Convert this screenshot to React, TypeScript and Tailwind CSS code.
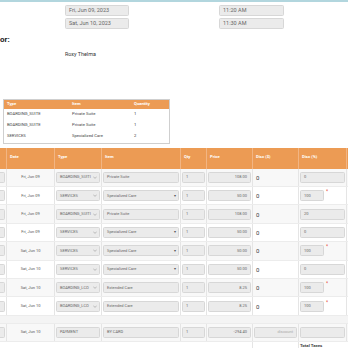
import React from 'react';

type Row = {
    date: string;
    type: string;
    item: string;
    itemSel?: boolean;
    price: string;
    pct: string;
    req?: boolean;
};

const rows: Row[] = [
    { date: 'Fri, Jun 09', type: 'BOARDING_SUITI', item: 'Private Suite', price: '108.00', pct: '0' },
    { date: 'Fri, Jun 09', type: 'SERVICES', item: 'Specialized Care', itemSel: true, price: '50.00', pct: '100', req: true },
    { date: 'Fri, Jun 09', type: 'BOARDING_SUITI', item: 'Private Suite', price: '108.00', pct: '20' },
    { date: 'Fri, Jun 09', type: 'SERVICES', item: 'Specialized Care', itemSel: true, price: '50.00', pct: '0' },
    { date: 'Sat, Jun 10', type: 'SERVICES', item: 'Specialized Care', itemSel: true, price: '50.00', pct: '100', req: true },
    { date: 'Sat, Jun 10', type: 'SERVICES', item: 'Specialized Care', itemSel: true, price: '50.00', pct: '0' },
    { date: 'Sat, Jun 10', type: 'BOARDING_LCO', item: 'Extended Care', price: '8.25', pct: '100', req: true },
    { date: 'Sat, Jun 10', type: 'BOARDING_LCO', item: 'Extended Care', price: '8.25', pct: '100', req: true },
];

const summary = [
    ['BOARDING_SUITE', 'Private Suite', '1'],
    ['BOARDING_SUITE', 'Private Suite', '1'],
    ['SERVICES', 'Specialized Care', '2'],
];

// grey input box used all over the grid
const Box: React.FC<{ className?: string; children?: React.ReactNode }> = ({ className = '', children }) => (
    <div className={`h-[11px] flex items-center bg-[#ebebeb] border border-[#d7d7d7] rounded-[1.5px] text-[4px] text-[#666] ${className}`}>
        {children}
    </div>
);

const Chevron = () => (
    <svg width="4" height="3" viewBox="0 0 4 3" className="ml-auto mr-[2px]">
        <path d="M0.3 0.6 L2 2.4 L3.7 0.6" fill="none" stroke="#888" strokeWidth="0.5" />
    </svg>
);

const cell = 'border-r border-[#e5e5e5] flex items-center px-[1px]';

const App: React.FC = () => {
    return (
        <div className="w-[348px] h-[348px] overflow-hidden bg-white antialiased font-['Roboto','Liberation_Sans',sans-serif]">
            <div className="h-[2px] bg-[#b2d6de]" />

            {/* Date / time range */}
            <div className="flex pt-[3px] pl-[65px]">
                <div className="w-[64px] flex flex-col gap-[2px]">
                    <Box className="h-[11.5px] pl-[3px] text-[5.5px] text-[#555]">Fri, Jun 09, 2023</Box>
                    <Box className="h-[11.5px] pl-[3px] text-[5.5px] text-[#555]">Sat, Jun 10, 2023</Box>
                </div>
                <div className="w-[65px] ml-[90px] flex flex-col gap-[2px]">
                    <Box className="h-[11.5px] pl-[3px] text-[5.5px] text-[#555]">11:20 AM</Box>
                    <Box className="h-[11.5px] pl-[3px] text-[5.5px] text-[#555]">11:30 AM</Box>
                </div>
            </div>

            <div className="mt-[7px] text-[8px] leading-[8px] font-bold text-[#222]">or:</div>
            <div className="mt-[7px] pl-[65px] text-[5.4px] leading-[6px] text-[#333]">Roxy Thelma</div>

            {/* Summary table */}
            <div className="mt-[42px] ml-[3px] w-[167px] border border-[#cfcfcf] pb-[1px]">
                <div className="h-[9px] bg-[#ec9b54] flex items-center text-[4.2px] font-bold text-white">
                    <div className="w-[68px] pl-[3px]">Type</div>
                    <div className="w-[62px]">Item</div>
                    <div>Quantity</div>
                </div>
                {summary.map((r, i) => (
                    <div key={i} className="h-[11px] flex items-center text-[4.2px] text-[#444]">
                        <div className="w-[68px] pl-[3px]">{r[0]}</div>
                        <div className="w-[62px]">{r[1]}</div>
                        <div className="text-[#333]">{r[2]}</div>
                    </div>
                ))}
            </div>

            {/* Line items */}
            <div className="mt-[4px] w-[420px] text-[4px]">
                <div className="h-[20.5px] bg-[#ec9b54] grid grid-cols-[7px_48px_47px_79px_26px_46px_46px_48px_73px] text-[4.2px] font-bold text-white">
                    {['', 'Date', 'Type', 'Item', 'Qty', 'Price', 'Disc ($)', 'Disc (%)', ''].map((h, i) => (
                        <div key={i} className="border-r border-[#f2b583] flex items-center pl-[3px] pb-[3px]">{h}</div>
                    ))}
                </div>

                {rows.map((r, i) => (
                    <div
                        key={i}
                        className={`h-[18.43px] grid grid-cols-[7px_48px_47px_79px_26px_46px_46px_48px_73px] border-b border-[#ececec] ${i % 2 === 0 ? 'bg-[#f8f8f8]' : 'bg-white'}`}
                    >
                        <div className={`${cell} overflow-hidden`}>
                            <Box className="ml-[-20px] w-[24px] shrink-0" />
                        </div>
                        <div className={`${cell} justify-center text-[#555]`}>{r.date}</div>
                        <div className={cell}>
                            <Box className="w-full pl-[3px]">
                                <span>{r.type}</span>
                                <Chevron />
                            </Box>
                        </div>
                        <div className={cell}>
                            <Box className="w-full pl-[3px] text-[#555]">
                                <span>{r.item}</span>
                                {r.itemSel && <span className="ml-auto mr-[2px] text-[4px] text-[#555]">▾</span>}
                            </Box>
                        </div>
                        <div className={cell}>
                            <Box className="w-full pl-[3px]">1</Box>
                        </div>
                        <div className={cell}>
                            <Box className="w-full justify-end pr-[3px] text-[#555]">{r.price}</Box>
                        </div>
                        <div className={`${cell} pl-[3px] text-[6px] text-[#3a3a3a]`}>0</div>
                        <div className={cell}>
                            {r.req ? (
                                <div className="flex items-start">
                                    <Box className="w-[24px] pl-[3px]">{r.pct}</Box>
                                    <span className="ml-[2px] mt-[-2px] text-[5px] text-[#e53935]">*</span>
                                </div>
                            ) : (
                                <Box className="w-full pl-[3px]">{r.pct}</Box>
                            )}
                        </div>
                        <div />
                    </div>
                ))}

                <div className="h-[7.7px] bg-[#f4f4f4] border-b border-[#ececec]" />

                {/* Payment row */}
                <div className="h-[18px] grid grid-cols-[7px_48px_47px_79px_26px_46px_46px_48px_73px] bg-[#f8f8f8] border-b border-[#ececec]">
                    <div className={`${cell} overflow-hidden`}>
                        <Box className="ml-[-20px] w-[24px] shrink-0" />
                    </div>
                    <div className={`${cell} justify-center text-[#555]`}>Sat, Jun 10</div>
                    <div className={cell}>
                        <Box className="w-full pl-[3px]">PAYMENT</Box>
                    </div>
                    <div className={cell}>
                        <Box className="w-full pl-[3px]">BY CARD</Box>
                    </div>
                    <div className={cell}>
                        <Box className="w-full pl-[3px]">1</Box>
                    </div>
                    <div className={cell}>
                        <Box className="w-full justify-end pr-[3px] text-[#555]">-294.40</Box>
                    </div>
                    <div className={cell}>
                        <Box className="w-full justify-end pr-[3px] text-[#aaa]">discount</Box>
                    </div>
                    <div className={cell}>
                        <Box className="w-full" />
                    </div>
                    <div />
                </div>

                <div className="grid grid-cols-[7px_48px_47px_79px_26px_46px_46px_48px_73px] h-[12px]">
                    <div className="col-span-6 border-r border-[#e5e5e5]" />
                    <div className="border-r border-[#e5e5e5]" />
                    <div className="pl-[1px] pt-[1px] text-[4.4px] leading-[5px] font-bold text-[#444]">Total Taxes</div>
                </div>
            </div>
        </div>
    );
};

export default App;
